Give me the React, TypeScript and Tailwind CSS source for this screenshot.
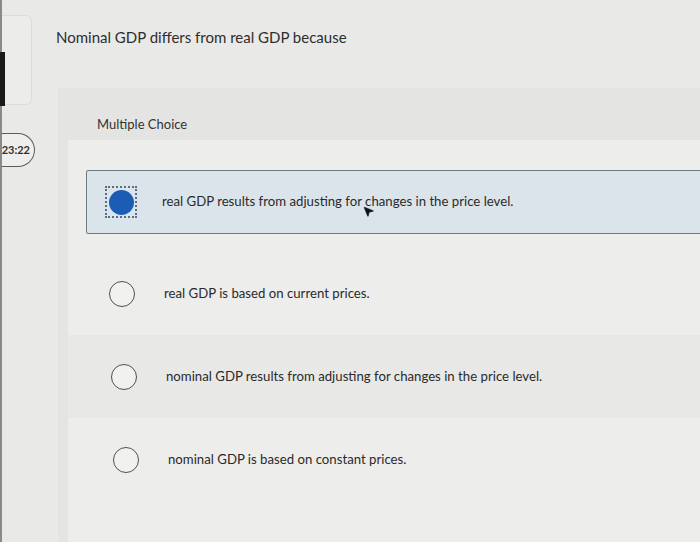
import { MousePointer2 } from "lucide-react";

const options = [
	{ text: "real GDP results from adjusting for changes in the price level.", selected: true },
	{ text: "real GDP is based on current prices.", selected: false },
	{ text: "nominal GDP results from adjusting for changes in the price level.", selected: false },
	{ text: "nominal GDP is based on constant prices.", selected: false },
];

const Radio = ({ selected }: { selected: boolean }) =>
	selected ? (
		<div className="w-[32px] h-[32px] border-2 border-dotted border-[#5a6f86] flex items-center justify-center shrink-0">
			<div className="w-[25px] h-[25px] rounded-full bg-[#1b5db5]" />
		</div>
	) : (
		<div className="w-[32px] h-[32px] flex items-center justify-center shrink-0">
			<div className="w-[26px] h-[26px] rounded-full border-[1.5px] border-[#505050] bg-[#f1f1f0]" />
		</div>
	);

export default function App() {
	return (
		<div
			className="w-[700px] h-[542px] bg-[#e9e9e8] flex overflow-hidden text-[#2e2e2e]"
			style={{ fontFamily: "Lato, 'Open Sans', sans-serif" }}
		>
			{/* left rail */}
			<div className="w-[56px] shrink-0 border-l-2 border-[#8a8a8a] flex flex-col">
				<div className="mt-[15px] h-[90px] w-[30px] border border-l-0 border-[#dcdcdb] rounded-r-md relative bg-[#ececeb]">
					<div className="absolute left-[-2px] top-[36px] w-[5px] h-[54px] bg-[#1a1a1a]" />
				</div>
				<div className="mt-[28px] h-[34px] w-[33px] border border-l-0 border-[#5c5c5c] rounded-r-full flex items-center justify-end pr-[4px] overflow-hidden bg-[#eeeeed]">
					<span className="text-[11px] font-bold text-[#333] whitespace-nowrap -ml-2">23:22</span>
				</div>
			</div>

			{/* main */}
			<div className="flex-1 flex flex-col">
				<div className="pt-[27px] h-[88px] text-[15px] leading-[20px]">Nominal GDP differs from real GDP because</div>
				<div className="flex-1 flex flex-col ml-[2px] bg-[#e4e4e3]">
					<div className="h-[52px] pl-[39px] pt-[28px] text-[13px] leading-[16px] text-[#333]">Multiple Choice</div>
					<div className="flex-1 ml-[10px] bg-[#ededec] flex flex-col pt-[30px]">
						{options.map((o, i) =>
							o.selected ? (
								<div
									key={i}
									className="ml-[18px] h-[64px] -mr-4 bg-[#dce4eb] border-[1.5px] border-[#6f7a84] rounded-[2px] flex items-center pl-[18px] gap-[25px] relative"
								>
									<Radio selected />
									<span className="text-[13.2px] text-[#2a2a2a]">{o.text}</span>
									<MousePointer2
										className="absolute left-[275px] top-[34px] text-[#111]"
										size={13}
										fill="#111"
										strokeWidth={1}
									/>
								</div>
							) : (
								<div
									key={i}
									className={
										"h-[83px] flex items-center gap-[26px] " +
										(i === 1 ? "mt-[18px] pl-[38px] " : i === 2 ? "pl-[40px] bg-[#e8e8e7] " : "pl-[42px] ")
									}
								>
									<Radio selected={false} />
									<span className="text-[13.2px] text-[#2a2a2a]">{o.text}</span>
								</div>
							)
						)}
					</div>
				</div>
			</div>
		</div>
	);
}
